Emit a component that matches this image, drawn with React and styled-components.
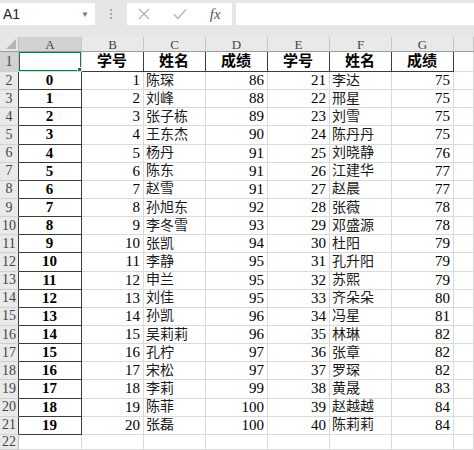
import styled, { createGlobalStyle } from "styled-components"

const GlobalStyle = createGlobalStyle`
  html, body {
    margin: 0;
    padding: 0;
    background: #ffffff;
    overflow: hidden;
  }
`

const serif = `"Liberation Serif", "Noto Sans CJK SC", serif`

const Window = styled.div`
  width: 474px;
  height: 450px;
  display: flex;
  flex-direction: column;
  background: #ffffff;
  overflow: hidden;
`

const FormulaBar = styled.div`
  height: 37px;
  box-sizing: border-box;
  padding-top: 3px;
  display: flex;
  align-items: flex-start;
  background: #e6e6e6;
`

const NameBox = styled.div`
  width: 95px;
  height: 22px;
  box-sizing: border-box;
  padding: 0 6px 0 3px;
  display: flex;
  align-items: center;
  justify-content: space-between;
  background: #ffffff;
  font-family: "Liberation Sans", sans-serif;
  font-size: 14px;
  color: #262626;
  span:last-child {
    font-size: 8px;
    color: #777;
  }
`

const Grip = styled.div`
  width: 32px;
  height: 22px;
  display: flex;
  flex-direction: column;
  align-items: center;
  justify-content: center;
  gap: 2px;
  i {
    display: block;
    width: 2px;
    height: 2px;
    background: #a8a8a8;
  }
`

const FxBox = styled.div`
  width: 105px;
  height: 22px;
  display: flex;
  align-items: center;
  justify-content: space-around;
  background: #ffffff;
  svg { display: block; }
  em {
    font-family: ${serif};
    font-size: 15px;
    color: #555;
  }
`

const FormulaInput = styled.div`
  flex: 1;
  height: 22px;
  margin-left: 4px;
  background: #ffffff;
`

const Sheet = styled.div`
  display: grid;
  grid-template-columns: 19px 63px repeat(6, 62px) 1fr;
  grid-template-rows: 15px 20px repeat(20, 18.15px) 1fr;
  font-family: ${serif};
`

const Corner = styled.div`
  position: relative;
  background: #e6e6e6;
  border-right: 1px solid #c0c0c0;
  border-bottom: 1px solid #9c9c9c;
  &::after {
    content: "";
    position: absolute;
    right: 2px;
    bottom: 2px;
    border-style: solid;
    border-width: 0 0 10px 10px;
    border-color: transparent transparent #b4b4b4 transparent;
  }
`

const ColHead = styled.div`
  display: flex;
  align-items: center;
  justify-content: center;
  background: ${p => (p.$active ? "#d2d2d2" : "#e9e9e9")};
  border-right: 1px solid #c6c6c6;
  border-bottom: 1px solid #9c9c9c;
  font-size: 13px;
  color: #444;
  line-height: 1;
`

const RowHead = styled.div`
  display: flex;
  align-items: center;
  justify-content: center;
  background: ${p => (p.$active ? "#d2d2d2" : "#e9e9e9")};
  border-right: 1px solid ${p => (p.$edge ? "#3c3c3c" : "#bcbcbc")};
  border-bottom: 1px solid #d0d0d0;
  font-size: 14px;
  color: #444;
  line-height: 1;
`

const Cell = styled.div`
  position: relative;
  display: flex;
  align-items: center;
  justify-content: ${p => p.$align || "flex-start"};
  padding: 0 3px 0 2px;
  box-sizing: border-box;
  border-right: 1px solid ${p => (p.$strong ? "#3c3c3c" : "#dadada")};
  border-bottom: 1px solid ${p => (p.$strong ? "#3c3c3c" : "#dadada")};
  font-size: ${p => (p.$cjk ? "14px" : "15px")};
  font-weight: ${p => (p.$bold ? 700 : 400)};
  color: ${p => (p.$cjk ? "#1a1a1a" : "#000")};
  white-space: nowrap;
  overflow: hidden;
  line-height: 1;
`

const Selection = styled.div`
  position: absolute;
  left: -1px;
  top: -1px;
  right: -1px;
  bottom: -1px;
  border: 2px solid #217346;
  pointer-events: none;
  &::after {
    content: "";
    position: absolute;
    right: -4px;
    bottom: -4px;
    width: 5px;
    height: 5px;
    background: #217346;
    border: 1px solid #fff;
  }
`

const letters = ["A", "B", "C", "D", "E", "F", "G", ""]

const rows = [
  [1, "陈琛", 86, 21, "李达", 75],
  [2, "刘峰", 88, 22, "邢星", 75],
  [3, "张子栋", 89, 23, "刘雪", 75],
  [4, "王东杰", 90, 24, "陈丹丹", 75],
  [5, "杨丹", 91, 25, "刘晓静", 76],
  [6, "陈东", 91, 26, "江建华", 77],
  [7, "赵雪", 91, 27, "赵晨", 77],
  [8, "孙旭东", 92, 28, "张薇", 78],
  [9, "李冬雪", 93, 29, "邓盛源", 78],
  [10, "张凯", 94, 30, "杜阳", 79],
  [11, "李静", 95, 31, "孔升阳", 79],
  [12, "申兰", 95, 32, "苏熙", 79],
  [13, "刘佳", 95, 33, "齐朵朵", 80],
  [14, "孙凯", 96, 34, "冯星", 81],
  [15, "吴莉莉", 96, 35, "林琳", 82],
  [16, "孔柠", 97, 36, "张章", 82],
  [17, "宋松", 97, 37, "罗琛", 82],
  [18, "李莉", 99, 38, "黄晟", 83],
  [19, "陈菲", 100, 39, "赵越越", 84],
  [20, "张磊", 100, 40, "陈莉莉", 84],
]

const titles = ["学号", "姓名", "成绩", "学号", "姓名", "成绩"]
const aligns = ["flex-end", "flex-start", "flex-end", "flex-end", "flex-start", "flex-end"]

export default function App() {
  return (
    <Window>
      <GlobalStyle />
      <FormulaBar>
        <NameBox>
          <span>A1</span>
          <span>▼</span>
        </NameBox>
        <Grip><i /><i /><i /></Grip>
        <FxBox>
          <svg width="12" height="12" viewBox="0 0 12 12">
            <path d="M1 1 L11 11 M11 1 L1 11" stroke="#b4b4b4" strokeWidth="1.3" fill="none" />
          </svg>
          <svg width="14" height="12" viewBox="0 0 14 12">
            <path d="M1 6.5 L5 10.5 L13 1.5" stroke="#b4b4b4" strokeWidth="1.3" fill="none" />
          </svg>
          <em>fx</em>
        </FxBox>
        <FormulaInput />
      </FormulaBar>

      <Sheet>
        <Corner />
        {letters.map((l, i) => (
          <ColHead key={i} $active={l === "A"}>{l}</ColHead>
        ))}

        <RowHead $active>1</RowHead>
        <Cell>
          <Selection />
        </Cell>
        {titles.map((t, i) => (
          <Cell key={i} $strong $bold $align="center">{t}</Cell>
        ))}
        <Cell />

        {rows.map((r, ri) => (
          <RowLine key={ri} n={ri + 2} index={ri} data={r} />
        ))}

        <RowHead>22</RowHead>
        {letters.map((_, i) => <Cell key={i} />)}
      </Sheet>
    </Window>
  )
}

function RowLine({ n, index, data }) {
  return (
    <>
      <RowHead $edge>{n}</RowHead>
      <Cell $strong $bold $align="center">{index}</Cell>
      {data.map((v, i) => (
        <Cell key={i} $align={aligns[i]} $cjk={typeof v === "string"}>{v}</Cell>
      ))}
      <Cell />
    </>
  )
}
